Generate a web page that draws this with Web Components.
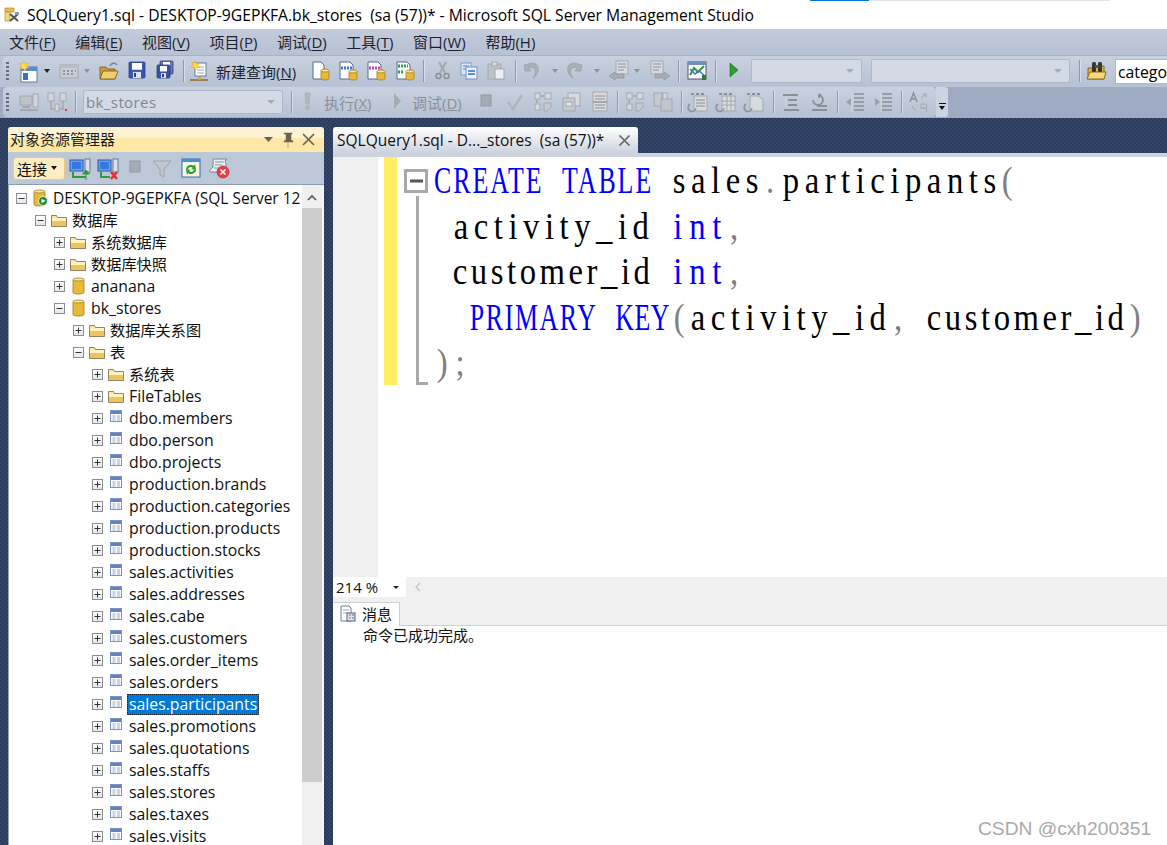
<!DOCTYPE html>
<html lang="zh"><head><meta charset="utf-8"><title>SSMS</title>
<style>
html,body{margin:0;height:845px;overflow:hidden;background:#2e3f5e}
body{font-family:"Open Sans","Noto Sans CJK SC",sans-serif}
</style></head><body>
<ssms-app>
  <title-bar>SQLQuery1.sql - DESKTOP-9GEPKFA.bk_stores&nbsp; (sa (57))* - Microsoft SQL Server Management Studio</title-bar>
  <menu-bar>
    <menu-item label="文件" key="F"></menu-item><menu-item label="编辑" key="E"></menu-item><menu-item label="视图" key="V"></menu-item><menu-item label="项目" key="P"></menu-item><menu-item label="调试" key="D"></menu-item><menu-item label="工具" key="T"></menu-item><menu-item label="窗口" key="W"></menu-item><menu-item label="帮助" key="H"></menu-item>
  </menu-bar>
  <tool-bar>
    <ui-icon name="newproj" ml="9"></ui-icon><drop-tri ml="6"></drop-tri>
    <ui-icon name="gridgray" ml="9"></ui-icon><drop-tri ml="5" off></drop-tri>
    <ui-icon name="open" ml="9"></ui-icon><ui-icon name="save" ml="9"></ui-icon><ui-icon name="saveall" ml="10"></ui-icon>
    <tb-sep ml="9"></tb-sep><ui-icon name="newquery" ml="6"></ui-icon>
    <tb-text ml="8" w="81" label="新建查询" key="N"></tb-text>
    <ui-icon name="dbdoc" ml="15"></ui-icon><ui-icon name="mdx" ml="9"></ui-icon><ui-icon name="dmx" ml="9"></ui-icon><ui-icon name="xml" ml="10"></ui-icon>
    <tb-sep ml="8"></tb-sep><ui-icon name="cut" ml="11"></ui-icon><ui-icon name="copy" ml="10"></ui-icon><ui-icon name="paste" ml="9"></ui-icon>
    <tb-sep ml="10"></tb-sep><ui-icon name="undo" ml="7"></ui-icon><drop-tri ml="11" off></drop-tri><ui-icon name="redo" ml="8"></ui-icon><drop-tri ml="11" off></drop-tri>
    <ui-icon name="navback" ml="9"></ui-icon><drop-tri ml="5" off></drop-tri><ui-icon name="navfwd" ml="10"></ui-icon>
    <tb-sep ml="8"></tb-sep><ui-icon name="chart" ml="8"></ui-icon><tb-sep ml="8"></tb-sep><ui-icon name="playgreen" ml="13"></ui-icon>
    <tb-combo w="111" ml="12"></tb-combo><tb-combo w="199" ml="9"></tb-combo>
    <tb-sep ml="9"></tb-sep><ui-icon name="binoc" ml="7"></ui-icon>
    <search-box ml="9">catego</search-box>
  </tool-bar>
  <tool-bar second>
    <ui-icon name="srv1" ml="10"></ui-icon><ui-icon name="srv2" ml="8"></ui-icon><tb-sep ml="8"></tb-sep>
    <tb-combo w="200" ml="7" text="bk_stores"></tb-combo><tb-sep ml="8"></tb-sep>
    <ui-icon name="excl" ml="10"></ui-icon><tb-text ml="11" w="49" label="执行" key="X" off></tb-text>
    <ui-icon name="playgray" ml="20"></ui-icon><tb-text ml="10" w="50" label="调试" key="D" off></tb-text>
    <ui-icon name="stop" ml="18"></ui-icon><ui-icon name="check" ml="14"></ui-icon><ui-icon name="flow1" ml="10"></ui-icon><ui-icon name="docs" ml="10"></ui-icon><ui-icon name="panel" ml="11"></ui-icon>
    <tb-sep ml="9"></tb-sep><ui-icon name="flow1" ml="8"></ui-icon><ui-icon name="srvdoc" ml="9"></ui-icon>
    <tb-sep ml="8"></tb-sep><ui-icon name="res1" ml="7"></ui-icon><ui-icon name="res2" ml="9"></ui-icon><ui-icon name="res3" ml="9"></ui-icon>
    <tb-sep ml="9"></tb-sep><ui-icon name="lines" ml="8"></ui-icon><ui-icon name="unlines" ml="11"></ui-icon>
    <tb-sep ml="9"></tb-sep><ui-icon name="outdent" ml="7"></ui-icon><ui-icon name="indent" ml="8"></ui-icon>
    <tb-sep ml="8"></tb-sep><ui-icon name="replace" ml="7"></ui-icon>
    <tb-overflow></tb-overflow>
  </tool-bar>
  <dock-area>
    <explorer-panel>
      <span slot="title">对象资源管理器</span>
      <tree-node level="0" icon="server" exp="-" fs="15.5">DESKTOP-9GEPKFA (SQL Server 12</tree-node>
      <tree-node level="1" icon="folder" exp="-">数据库</tree-node>
      <tree-node level="2" icon="folder">系统数据库</tree-node>
      <tree-node level="2" icon="folder">数据库快照</tree-node>
      <tree-node level="2" icon="db">ananana</tree-node>
      <tree-node level="2" icon="db" exp="-">bk_stores</tree-node>
      <tree-node level="3" icon="folder">数据库关系图</tree-node>
      <tree-node level="3" icon="folder" exp="-">表</tree-node>
      <tree-node level="4" icon="folder">系统表</tree-node>
      <tree-node level="4" icon="folder">FileTables</tree-node>
      <tree-node level="4" icon="table">dbo.members</tree-node>
      <tree-node level="4" icon="table">dbo.person</tree-node>
      <tree-node level="4" icon="table">dbo.projects</tree-node>
      <tree-node level="4" icon="table">production.brands</tree-node>
      <tree-node level="4" icon="table">production.categories</tree-node>
      <tree-node level="4" icon="table">production.products</tree-node>
      <tree-node level="4" icon="table">production.stocks</tree-node>
      <tree-node level="4" icon="table">sales.activities</tree-node>
      <tree-node level="4" icon="table">sales.addresses</tree-node>
      <tree-node level="4" icon="table">sales.cabe</tree-node>
      <tree-node level="4" icon="table">sales.customers</tree-node>
      <tree-node level="4" icon="table">sales.order_items</tree-node>
      <tree-node level="4" icon="table">sales.orders</tree-node>
      <tree-node level="4" icon="table" selected>sales.participants</tree-node>
      <tree-node level="4" icon="table">sales.promotions</tree-node>
      <tree-node level="4" icon="table">sales.quotations</tree-node>
      <tree-node level="4" icon="table">sales.staffs</tree-node>
      <tree-node level="4" icon="table">sales.stores</tree-node>
      <tree-node level="4" icon="table">sales.taxes</tree-node>
      <tree-node level="4" icon="table">sales.visits</tree-node>
    </explorer-panel>
    <editor-pane>
      <span slot="tab">SQLQuery1.sql - D..._stores&nbsp; (sa (57))*</span>
      <code-line><sql-t k="kw">CREATE</sql-t><sql-t> </sql-t><sql-t k="kw">TABLE</sql-t><sql-t> </sql-t><sql-t>sales</sql-t><sql-t k="p">.</sql-t><sql-t>participants</sql-t><sql-t k="p">(</sql-t></code-line>
      <code-line indent="1"><sql-t>activity_id</sql-t><sql-t> </sql-t><sql-t k="kw">int</sql-t><sql-t k="p">,</sql-t></code-line>
      <code-line indent="1"><sql-t>customer_id</sql-t><sql-t> </sql-t><sql-t k="kw">int</sql-t><sql-t k="p">,</sql-t></code-line>
      <code-line indent="2"><sql-t k="kw">PRIMARY</sql-t><sql-t> </sql-t><sql-t k="kw">KEY</sql-t><sql-t k="p">(</sql-t><sql-t>activity_id</sql-t><sql-t k="p">,</sql-t><sql-t> </sql-t><sql-t>customer_id</sql-t><sql-t k="p">)</sql-t></code-line>
      <code-line><sql-t k="p">)</sql-t><sql-t k="p">;</sql-t></code-line>
      <span slot="msg">命令已成功完成。</span>
    </editor-pane>
  </dock-area>
  <water-mark>CSDN @cxh200351</water-mark>
</ssms-app>
<script>
const G='#a4a8ae',GD='#8b9098',GL='#d5d8dc';
const dbCyl=(x,y,w,h)=>`<path d="M${x} ${y+1.5}v${h-3}c0 2 ${w} 2 ${w} 0v-${h-3}z" fill="#e8b93a" stroke="#a57c1c" stroke-width=".8"/><ellipse cx="${x+w/2}" cy="${y+1.5}" rx="${w/2}" ry="1.5" fill="#f8e7a0" stroke="#a57c1c" stroke-width=".8"/>`;
const doc=(x,y,w,h,s='#5a6a80',f='#fff')=>`<path d="M${x} ${y}h${w-3}l3 3v${h-3}h-${w}z" fill="${f}" stroke="${s}"/>`;
const floppy=(c,x=2,y=2,s=16)=>`<rect x="${x}" y="${y}" width="${s}" height="${s}" rx="1" fill="${c}" stroke="#27408b" stroke-width=".8"/><rect x="${x+3}" y="${y+1}" width="${s-6}" height="${s*.42}" fill="#fff"/><rect x="${x+4}" y="${y+s*.62}" width="${s-8}" height="${s*.38}" fill="#dfe3f0"/><rect x="${x+5}" y="${y+s*.68}" width="2" height="${s*.26}" fill="#27408b"/>`;
const I={
newproj:[20,`<rect x="3" y="6" width="16" height="15" fill="#fff" stroke="#5c7ba8"/><rect x="3" y="6" width="16" height="4" fill="#5b8bd0"/><rect x="5" y="12" width="5" height="7" fill="#3c6fb4"/><path d="M6 0l1.3 3L10 2 8.6 5 11 6.5 8 7.3 7 10 5 7.5 1.5 8l2-2.6L1.500 2.500 4.500 3z" fill="#ffdc50" stroke="#e0a020" stroke-width=".5"/>`],
gridgray:[20,`<rect x="1" y="4" width="18" height="13" fill="#c9ccd1" stroke="${G}"/><rect x="1" y="4" width="18" height="3" fill="#b9bcc2"/><path d="M4 10h2M8 10h2M12 10h2M16 10h1M4 13h2M8 13h2M12 13h2" stroke="#8f949b" stroke-width="2"/>`],
open:[20,`<path d="M1 6h6l2 2h7v10H1z" fill="#c99a3a" stroke="#8a6a20"/><path d="M1 18l3-8h15l-3 8z" fill="#f4cd70" stroke="#8a6a20"/><path d="M11 5c1-3 5-4 7-1" fill="none" stroke="#6a88b8" stroke-width="1.500"/>`],
save:[18,floppy('#3f56b0',1,1,16)],
saveall:[18,floppy('#6a75b8',4,0,13)+floppy('#3f4fa0',1,4,13)],
newquery:[18,`<rect x="5" y="2" width="11" height="13" fill="#fff" stroke="#6c7a8c"/><path d="M7 6h7M7 9h7M7 12h7" stroke="#9aa6b5"/><path d="M5 0l1.300 2.500L9 2 8 4.500 10 6.500 7 6.500 5 9 4 6.500 1 6l2-2L2 1.500 4.200 2z" fill="#ffd84a" stroke="#d99a1a" stroke-width=".5"/><path d="M0 19h18" stroke="#8a6a20" stroke-width="1.500"/><rect x="8" y="16" width="3" height="3" fill="#d9a520"/>`],
dbdoc:[18,doc(1,1,11,17)+dbCyl(9,8,8,11)],
mdx:[19,doc(1,1,13,17)+`<path d="M2 7h11" stroke="#3a7bd0" stroke-width="3" stroke-dasharray="2 1"/>`+dbCyl(10,9,8,10)],
dmx:[19,doc(1,1,13,17)+`<path d="M2 7h11" stroke="#d040c0" stroke-width="3" stroke-dasharray="2 1"/>`+dbCyl(10,9,8,10)],
xml:[19,doc(1,1,13,17)+`<path d="M2 5h10M2 11h6" stroke="#2f9a50" stroke-width="3" stroke-dasharray="2 1"/>`+dbCyl(10,9,8,10)],
cut:[15,`<path d="M4 1l6 11M11 1L5 12" stroke="${G}" stroke-width="2"/><circle cx="3.500" cy="15" r="2.500" fill="none" stroke="${GD}" stroke-width="1.500"/><circle cx="11.500" cy="15" r="2.500" fill="none" stroke="${GD}" stroke-width="1.500"/>`],
copy:[18,`<rect x="1" y="2" width="10" height="12" fill="#dfe8f6" stroke="#7e9cc6"/><path d="M3 5h6M3 8h6" stroke="#4f7ec2"/><rect x="6" y="6" width="11" height="12" fill="#eef3fb" stroke="#6f90c0"/><path d="M8 10h7M8 13h7" stroke="#2f6fc6" stroke-width="1.500"/>`],
paste:[18,`<rect x="1" y="3" width="13" height="15" fill="#bfc3c9" stroke="${G}"/><rect x="5" y="1" width="5" height="4" fill="#d8dade" stroke="${G}"/><rect x="8" y="8" width="9" height="10" fill="#eceef0" stroke="${G}"/>`],
undo:[18,`<path d="M5 3C11 0 17 4 15 11c-1 3-3 5-5 6 2-3 3-6 2-8-1-3-4-3-6-2l2 3-6 0-1-6z" fill="#aab0b8" stroke="#9399a1" stroke-width=".6"/>`],
redo:[17,`<path d="M12 3C6 0 0 4 2 11c1 3 3 5 5 6-2-3-3-6-2-8 1-3 4-3 6-2l-2 3 6 0 1-6z" fill="#aab0b8" stroke="#9399a1" stroke-width=".6"/>`],
navback:[20,`<rect x="7" y="0" width="12" height="13" fill="#d9dbdf" stroke="${G}"/><path d="M9 3h8M9 6h8M9 9h6" stroke="${GD}"/><path d="M0 15l6-4v2h9v4H6v2z" fill="#a8adb4" stroke="${GD}" stroke-width=".6"/>`],
navfwd:[20,`<rect x="1" y="0" width="12" height="13" fill="#d9dbdf" stroke="${G}"/><path d="M3 3h8M3 6h8M3 9h6" stroke="${GD}"/><path d="M20 15l-6-4v2H5v4h9v2z" fill="#a8adb4" stroke="${GD}" stroke-width=".6"/>`],
chart:[20,`<rect x="1" y="1" width="18" height="17" fill="#fff" stroke="#44546a"/><rect x="1" y="1" width="18" height="3" fill="#6f8fbf"/><path d="M3 14l4-7 4 4 6-6" fill="none" stroke="#2f9a3a" stroke-width="2"/><path d="M3 8l5 5 4-3 5 4" fill="none" stroke="#3a6fd0" stroke-width="1.500"/><rect x="15" y="14" width="4" height="5" fill="#2e7a2e"/>`],
playgreen:[10,`<path d="M1 2l8 7-8 7z" fill="#2f9a2f" stroke="#1d6a1d" stroke-width=".6"/>`],
binoc:[19,`<path d="M1 7h6l2-2h8v13H1z" fill="#e0b040" stroke="#8a6a20"/><path d="M0 18l3-7h16l-2 7z" fill="#f6d878" stroke="#8a6a20"/><rect x="5" y="1" width="4" height="10" rx="1.500" fill="#333"/><rect x="11" y="1" width="4" height="10" rx="1.500" fill="#333"/><rect x="8" y="4" width="4" height="3" fill="#555"/>`],
srv1:[20,`<rect x="1" y="4" width="12" height="9" fill="#bfc2c7" stroke="${G}"/><rect x="3" y="14" width="8" height="2" fill="${G}"/><rect x="14" y="2" width="5" height="13" fill="#d3d5d9" stroke="${G}"/><path d="M1 18h18" stroke="${G}" stroke-width="2"/>`],
srv2:[20,`<rect x="1" y="1" width="6" height="8" fill="#d3d5d9" stroke="${G}"/><rect x="13" y="1" width="6" height="8" fill="#d3d5d9" stroke="${G}"/><path d="M4 9v8h12V9" fill="none" stroke="${G}" stroke-width="1.500"/><rect x="8" y="12" width="4" height="7" fill="#d3d5d9" stroke="${G}"/><rect x="18" y="17" width="2" height="2" fill="#c44"/>`],
excl:[11,`<path d="M3 1h5l-1 11H4z" fill="#b4b8be" stroke="${G}" stroke-width=".6"/><circle cx="5.500" cy="15.500" r="2" fill="#b4b8be" stroke="${G}" stroke-width=".6"/>`],
playgray:[9,`<path d="M1 1l7 8-7 8z" fill="#a6abb3"/>`],
stop:[12,`<rect x="1" y="3" width="10" height="11" fill="#a6abb3" stroke="#9399a1"/>`],
check:[18,`<path d="M2 10l5 7L16 3" fill="none" stroke="#b1b5bb" stroke-width="2.500"/>`],
flow1:[18,`<rect x="1" y="1" width="5" height="6" fill="#d8dade" stroke="${G}"/><rect x="11" y="1" width="6" height="6" fill="#d8dade" stroke="${G}"/><path d="M7 4h3M3 8v3" stroke="${GD}"/><rect x="1" y="12" width="5" height="6" fill="#d8dade" stroke="${G}"/><path d="M10 11h7v4l-4 4h-3z" fill="#c6c9ce" stroke="${G}"/>`],
docs:[19,`<rect x="6" y="1" width="12" height="13" fill="#d8dade" stroke="${G}"/><rect x="1" y="6" width="12" height="13" fill="#c6c9ce" stroke="${G}"/><rect x="4" y="10" width="6" height="4" fill="#e8eaec" stroke="${G}"/>`],
panel:[16,`<rect x="1" y="0" width="14" height="19" fill="#d8dade" stroke="${G}"/><path d="M1 10h14" stroke="${G}" stroke-width="2"/><path d="M3 4h10M3 7h10M3 13h10M3 16h10" stroke="${GD}"/>`],
srvdoc:[20,`<rect x="1" y="1" width="8" height="13" fill="#c6c9ce" stroke="${G}"/><rect x="10" y="1" width="4" height="9" fill="#d8dade" stroke="${G}"/><rect x="8" y="7" width="11" height="12" fill="#c2c5ca" stroke="${G}"/>`],
res1:[19,`<rect x="5" y="4" width="13" height="15" fill="#d8dade" stroke="${G}"/><path d="M7 8h9M7 11h9M7 14h9" stroke="${GD}"/><path d="M2 2h3M7 2h3M12 2h3" stroke="${GD}" stroke-width="2"/><path d="M1 12a4 4 0 1 0 6 4" fill="none" stroke="${GD}" stroke-width="1.500"/>`],
res2:[19,`<rect x="5" y="4" width="13" height="15" fill="#d8dade" stroke="${G}"/><path d="M5 9h13M5 13h13M10 4v15M14 4v15" stroke="${G}"/><path d="M2 2h3M7 2h3M12 2h3" stroke="${GD}" stroke-width="2"/><path d="M1 12a4 4 0 1 0 6 4" fill="none" stroke="${GD}" stroke-width="1.500"/>`],
res3:[19,`<path d="M5 4h9l4 4v11H5z" fill="#d8dade" stroke="${G}"/><path d="M2 2h3M7 2h3M12 2h3" stroke="${GD}" stroke-width="2"/><path d="M1 12a4 4 0 1 0 6 4" fill="none" stroke="${GD}" stroke-width="1.500"/>`],
lines:[18,`<path d="M1 3h15M6 8h9M6 13h9M2 18h15" stroke="${GD}" stroke-width="2"/><path d="M4 6v9" stroke="${GL}"/>`],
unlines:[17,`<path d="M2 8a5 5 0 1 0 9-3l-3-3M8 2v4" fill="none" stroke="${GD}" stroke-width="1.800"/><path d="M6 14h10M1 18h15" stroke="${GD}" stroke-width="2"/>`],
outdent:[20,`<path d="M9 2h10M9 6h10M9 10h10M9 14h10M9 18h10" stroke="${GD}" stroke-width="1.500"/><path d="M1 10l5-4v8z" fill="#9aa0a8"/><path d="M7 0v20" stroke="${GL}"/>`],
indent:[20,`<path d="M9 2h10M9 6h10M9 10h10M9 14h10M9 18h10" stroke="${GD}" stroke-width="1.500"/><path d="M7 10L2 6v8z" fill="#9aa0a8"/><path d="M8 0v20" stroke="${GL}"/>`],
replace:[19,`<path d="M1 10L4.500 1 8 10M2.500 7h4" fill="none" stroke="${GD}" stroke-width="1.500"/><path d="M12 6l5-4M14 2h3v3" fill="none" stroke="${G}"/><path d="M4 14a3 3 0 0 0 3 4M12 12h5l1 2-1 2h-5zm0 4h5l1 2-1 2" fill="none" stroke="${G}"/>`],
conn:[21,`<rect x="1" y="2" width="13" height="11" fill="#6fa0ea" stroke="#2f55a5"/><rect x="3" y="4" width="9" height="7" fill="#2f7be0"/><rect x="16" y="1" width="5" height="13" fill="#dbe1ea" stroke="#6a7a90"/><path d="M4 14v5h13" fill="none" stroke="#2e9a3a" stroke-width="2"/><path d="M17 22v-9M13.500 16l3.500-4 3.500 4z" fill="#2e9a3a" stroke="#2e9a3a"/>`],
disc:[21,`<rect x="1" y="2" width="13" height="11" fill="#6fa0ea" stroke="#2f55a5"/><rect x="3" y="4" width="9" height="7" fill="#2f7be0"/><rect x="16" y="1" width="5" height="13" fill="#dbe1ea" stroke="#6a7a90"/><path d="M4 14v5h9" fill="none" stroke="#2e9a3a" stroke-width="2"/><path d="M14 14l6 7M20 14l-6 7" stroke="#e0332a" stroke-width="2.500"/>`],
filter:[20,`<path d="M1 3h18l-7 8v8l-4-2v-6z" fill="#c3c7cd" stroke="#9fa3a9"/>`],
refresh:[20,`<rect x="1" y="1" width="18" height="18" fill="#f8f6e4" stroke="#2f70b0"/><rect x="1" y="1" width="18" height="3" fill="#4a90d0"/><path d="M5 11a5 5 0 0 1 8-3l1-2 1 6-5-1 2-1a3 3 0 0 0-5 1z" fill="#2e9a2e"/><path d="M15 12a5 5 0 0 1-8 3l-1 2-1-6 5 1-2 1a3 3 0 0 0 5-1z" fill="#2e9a2e"/>`],
activity:[20,`<path d="M4 1h14c-2 1-2 3-1 5v8H2c-1 0-2-1 0-3l2-2z" fill="#e8ecf2" stroke="#77879b"/><path d="M6 4h9M6 7h7M5 10h5" stroke="#8a9aaf"/><circle cx="14" cy="14" r="6" fill="#e8404a" stroke="#a02028" stroke-width=".6"/><path d="M11.500 11.500l5 5M16.500 11.500l-5 5" stroke="#fff" stroke-width="1.500"/>`],
server:[15,dbCyl(1,2,11,16)+`<circle cx="10" cy="13" r="4.500" fill="#1f8a2f" stroke="#fff" stroke-width=".8"/><path d="M8.500 10.700l4 2.300-4 2.300z" fill="#fff"/>`],
folder:[16,`<path d="M.5 5.500h5l1 2h9v9H.5z" fill="#fbe7a0" stroke="#77674a" stroke-width=".8"/><path d="M1 8h14v8H1z" fill="#eec45c"/><path d="M1 8h14v3H1z" fill="#fff3c4"/>`],
db:[13,dbCyl(1,2,11,16)],
table:[14,`<rect x="1.500" y="2.500" width="11" height="11" fill="#fff" stroke="#7d95bc"/><rect x="2" y="3" width="10" height="3" fill="#5f82c0"/><path d="M3.500 8h3M8 8h3M3.500 10h3M8 10h3M3.500 12h3M8 12h3" stroke="#8ea6cc"/>`]
};
function shadow(el,html){const r=el.attachShadow({mode:'open'});r.innerHTML=html;return r}
function def(name,fn){customElements.define(name,class extends HTMLElement{connectedCallback(){if(!this.shadowRoot)fn(this)}})}
const ml=e=>e.hasAttribute('ml')?`margin-left:${e.getAttribute('ml')}px;`:'';
def('ssms-app',e=>shadow(e,`<style>:host{display:flex;flex-direction:column;height:845px;position:relative;overflow:hidden}</style><slot></slot>`));
def('title-bar',e=>shadow(e,`<style>:host{display:block;background:#fff;height:29px;flex:none}
.strip{display:flex;height:1px}.a{width:810px}.b{width:59px;background:#0078d7}.c{width:241px;background:#e4e4e4}
.row{display:flex;align-items:center;height:28px;padding-left:4px;gap:7px;font:15.700px "Open Sans",sans-serif;color:#000;white-space:pre}
svg{width:16px;height:16px;flex:none}</style>
<div class="strip"><i class="a"></i><i class="b"></i><i class="c"></i></div>
<div class="row"><svg viewBox="0 0 16 16"><path d="M1 1h9v4H1z" fill="#e8c050" stroke="#a08020" stroke-width=".6"/><path d="M1 5h5v9H1z" fill="#f2d878" stroke="#a08020" stroke-width=".6"/><path d="M6 7l8 7M14 7l-8 7" stroke="#555" stroke-width="2"/><rect x="11" y="5" width="4" height="3" fill="#89a"/></svg><span><slot></slot></span></div>`));
def('menu-bar',e=>shadow(e,`<style>:host{display:flex;height:26px;flex:none;align-items:center;gap:19.600px;padding-left:9px;background:linear-gradient(#c3ccdc,#b6c1d3);border-bottom:1px solid #a6b2c6}</style><slot></slot>`));
def('menu-item',e=>shadow(e,`<style>:host{display:block;font:15px "Open Sans","Noto Sans CJK SC",sans-serif;color:#1c2330;white-space:nowrap;line-height:24px}u{text-underline-offset:2px}</style>${e.getAttribute('label')}(<u>${e.getAttribute('key')}</u>)`));
def('tool-bar',e=>{const s=e.hasAttribute('second');shadow(e,`<style>:host{display:block;flex:none;height:31px;background:${s?'#9eabc2':'#b9c4d6'};padding-left:3px;box-sizing:border-box}
.in{display:flex;align-items:center;height:30px;background:linear-gradient(#c8d1df,#b6c1d3);border-radius:4px 0 0 4px;position:relative;padding-left:2px;${s?'width:933px;box-sizing:border-box;border-radius:4px;':''}}
.g{width:3px;height:18px;margin-left:1px;flex:none;background:repeating-linear-gradient(#5f6c82 0 2px,transparent 2px 4px)}</style><div class="in"><i class="g"></i><slot></slot></div>`)});
def('ui-icon',e=>{const n=e.getAttribute('name'),[w,b]=I[n];shadow(e,`<style>:host{display:block;flex:none;width:${w}px;height:20px;${ml(e)}}svg{display:block;width:${w}px;height:20px;overflow:visible}</style><svg viewBox="0 0 ${w} 20">${b}</svg>`)});
def('drop-tri',e=>shadow(e,`<style>:host{display:block;flex:none;width:0;height:0;border:3.500px solid transparent;border-top:4px solid ${e.hasAttribute('off')?'#8d939c':'#222'};border-bottom:0;${ml(e)}}</style>`));
def('tb-sep',e=>shadow(e,`<style>:host{display:block;flex:none;width:1px;height:22px;background:#8f99aa;box-shadow:1px 0 #d8deea;${ml(e)}}</style>`));
def('tb-text',e=>shadow(e,`<style>:host{display:block;flex:none;width:${e.getAttribute('w')}px;white-space:nowrap;font:15px "Open Sans","Noto Sans CJK SC",sans-serif;color:${e.hasAttribute('off')?'#8a8f98':'#1c2330'};${ml(e)}}</style>${e.getAttribute('label')}(<u>${e.getAttribute('key')}</u>)`));
def('tb-combo',e=>shadow(e,`<style>:host{display:flex;flex:none;align-items:center;box-sizing:border-box;width:${e.getAttribute('w')}px;height:24px;background:#d3dae6;border:1px solid #aeb8c9;border-radius:2px;padding:0 4px 0 2px;font:15px "Open Sans",sans-serif;color:#7f8692;letter-spacing:.4px;${ml(e)}}
span{flex:1}i{width:0;height:0;border:4px solid transparent;border-top:4px solid #a3abb8;border-bottom:0;margin-right:3px}</style><span>${e.getAttribute('text')||''}</span><i></i>`));
def('search-box',e=>shadow(e,`<style>:host{display:block;flex:1;height:25px;background:#fff;border:1px solid #aeb8c9;border-right:0;box-sizing:border-box;font:15.800px/24px "Open Sans",sans-serif;color:#000;padding-left:2px;overflow:hidden;${ml(e)}}</style><slot></slot>`));
def('tb-overflow',e=>shadow(e,`<style>:host{position:absolute;left:933px;top:0;width:12px;height:30px;background:#ccd4e1;border-radius:0 3px 3px 0;display:flex;flex-direction:column;justify-content:flex-end;align-items:center;padding-bottom:7px;box-sizing:border-box;gap:2px}
b{width:7px;height:1px;background:#111}i{width:0;height:0;border:3.500px solid transparent;border-top:4px solid #111;border-bottom:0}</style><b></b><i></i>`));
def('dock-area',e=>shadow(e,`<style>:host{display:flex;flex:1;min-height:0;padding:9px 0 0 8px;gap:9px;background:repeating-conic-gradient(#2b3b59 0 25%,#33466a 0 50%) 0 0/4px 4px}</style><slot></slot>`));
def('explorer-panel',e=>shadow(e,`<style>:host{display:flex;flex-direction:column;width:316px;flex:none;min-height:0;font:15px "Open Sans","Noto Sans CJK SC",sans-serif}
.h{height:25px;flex:none;box-sizing:border-box;display:flex;align-items:center;padding:0 5px 3px 2px;border-radius:3px 3px 0 0;background:linear-gradient(#fdf3d4 0 45%,#ffe8a6 45%);color:#1c1c1c;font-size:15px}
.h .t{flex:1}.h svg{display:block;margin-top:3px}
.tb{height:33px;flex:none;box-sizing:border-box;background:#bcc7d8;display:flex;align-items:center;padding-left:5px;border-bottom:1px solid #8f9bb0}
.c{display:flex;align-items:center;gap:4px;width:52px;height:23px;box-sizing:border-box;padding-left:3px;background:#fdedc0;border:1px solid #f0c880;border-radius:3px;font-size:15px;color:#111;margin-right:4px}
.c i{width:0;height:0;border:3px solid transparent;border-top:4px solid #111;border-bottom:0}
.m{flex:1;min-height:0;display:flex;background:#fff;border-left:1px solid #9aa6b8;border-right:2px solid #f4f5f7;overflow:hidden}
.tree{flex:1;min-width:0;padding-top:2px;overflow:hidden}
.sb{width:20px;flex:none;background:#f0f0f0;display:flex;flex-direction:column}
.up{height:22px;flex:none;display:flex;align-items:center;justify-content:center;padding-top:1px}.th{height:574px;background:#cdcdcd;flex:none}
</style>
<div class="h"><span class="t"><slot name="title"></slot></span>
<svg width="56" height="18" viewBox="0 0 56 18"><path d="M1 6h9l-4.500 5z" fill="#6b6350"/><path d="M21 2h8v1h-1v6l2 1v1h-9v-1l2-1V3h-2zM25 11v6" fill="#6b6350" stroke="#6b6350" stroke-width=".5"/><path d="M40 3l11 11M51 3L40 14" stroke="#6b6350" stroke-width="1.700"/></svg></div>
<div class="tb"><div class="c">连接<i></i></div><ui-icon name="conn"></ui-icon><ui-icon name="disc" ml="7"></ui-icon><ui-icon name="stop" ml="11"></ui-icon><ui-icon name="filter" ml="11"></ui-icon><ui-icon name="refresh" ml="9"></ui-icon><ui-icon name="activity" ml="8"></ui-icon></div>
<div class="m"><div class="tree"><slot></slot></div><div class="sb"><div class="up"><svg width="10" height="7" viewBox="0 0 10 7"><path d="M1 6l4-4 4 4" fill="none" stroke="#555" stroke-width="1.600"/></svg></div><div class="th"></div></div></div>`));
def('tree-node',e=>{const l=+e.getAttribute('level'),ic=e.getAttribute('icon'),x=e.getAttribute('exp')=='-',sel=e.hasAttribute('selected');
const [w,b]=I[ic];const cjk=/[\u4e00-\u9fff]/.test(e.textContent);const fs=e.getAttribute('fs')||(cjk?15.2:15.8);
shadow(e,`<style>:host{display:flex;align-items:center;height:22px;white-space:nowrap;font:${fs}px "Open Sans","Noto Sans CJK SC",sans-serif;color:#101010;padding-left:${7+19*l}px;overflow:hidden}
.x{width:11px;height:11px;flex:none;box-sizing:border-box;border:1px solid #8a8f96;background:linear-gradient(#fff,#e4e6ea);margin-right:4px;display:block}
.ic{width:18px;flex:none;display:flex;justify-content:center;margin-right:2px}
svg{display:block;overflow:visible}
.t{padding:0 2px;line-height:21px;${sel?'background:#0078d7;color:#fff;outline:1px dotted #222;outline-offset:-1px;':''}}</style>
<svg class="x" viewBox="0 0 9 9"><path d="M1.500 4.500h6${x?'':'M4.500 1.500v6'}" stroke="#333" stroke-width="1" fill="none"/></svg><span class="ic"><svg width="${w}" height="20" viewBox="0 0 ${w} 20" style="height:20px">${b}</svg></span><span class="t"><slot></slot></span>`)});
const CELL=18.24;
def('editor-pane',e=>shadow(e,`<style>:host{display:flex;flex-direction:column;flex:1;min-width:0;font:15px "Open Sans","Noto Sans CJK SC",sans-serif}
.tabs{height:26px;flex:none;display:flex}.tab{width:305px;box-sizing:border-box;border-radius:3px 3px 0 0;background:linear-gradient(#fff,#ccd3de);display:flex;align-items:center;padding:0 7px 0 4px;font-size:15.500px;color:#111;white-space:pre}
.tab span{flex:1}
.strip{height:4px;background:#ccd3de;flex:none}
.ed{height:420px;flex:none;display:flex;background:#fff;overflow:hidden}
.gut{width:45px;background:#f0f0f0;flex:none;margin-right:6px}.ch{width:13px;height:228px;background:#ffee62;flex:none;margin-right:7px}
.ol{flex:none;width:24px;margin-right:5px;height:228px}
.code{flex:none;margin-top:1px;width:730px}
.z{height:20px;flex:none;display:flex;align-items:center;background:#f0f0f0}
.zc{width:73px;height:20px;box-sizing:border-box;background:#fff;display:flex;align-items:center;padding:0 4px 0 3px;font-size:15px;color:#111}.zc span{flex:1}
.zc i{width:0;height:0;border:3.500px solid transparent;border-top:3.500px solid #222;border-bottom:0;margin-right:3px}
.bot{flex:1;background:#fff;min-height:0}
.mt{height:29px;box-sizing:border-box;background:#f0f0f0;padding-top:5px;border-bottom:1px solid #d0d0d0;display:flex}
.mtab{width:67px;height:24px;box-sizing:border-box;background:#fff;border:1px solid #d0d0d0;border-left:0;border-bottom:0;display:flex;align-items:center;gap:6px;padding:0 0 3px 7px;font-size:15px;color:#111}
.msg{padding:0 0 0 30px;font-size:15px;line-height:18px;color:#111}
</style>
<div class="tabs"><div class="tab"><span><slot name="tab"></slot></span><svg width="13" height="13" viewBox="0 0 13 13"><path d="M1.500 1.500l10 10M11.500 1.500l-10 10" stroke="#666" stroke-width="1.700"/></svg></div></div>
<div class="strip"></div>
<div class="ed"><div class="gut"></div><div class="ch"></div>
<svg class="ol" viewBox="0 0 24 228"><rect x="1.500" y="13.500" width="21" height="21" fill="#fff" stroke="#a9a9a9" stroke-width="3"/><path d="M6 24h13" stroke="#555" stroke-width="3"/><path d="M13.500 39v187.500H24" fill="none" stroke="#a9a9a9" stroke-width="3"/></svg>
<div class="code"><slot></slot></div></div>
<div class="z"><div class="zc"><span>214 %</span><i></i></div><svg width="10" height="12" viewBox="0 0 10 12" style="margin-left:7px"><path d="M7 2L3 6l4 4" fill="none" stroke="#c4c4c4" stroke-width="1.300"/></svg></div>
<div class="bot"><div class="mt"><div class="mtab"><svg width="16" height="17" viewBox="0 0 16 17"><path d="M1 1h8l2 2v13H1z" fill="#fff" stroke="#6c7a8c"/><path d="M3 5h6M3 8h6" stroke="#9ab"/><rect x="7" y="8" width="8" height="8" fill="#dfe6f2" stroke="#46648e"/><path d="M9 10h2M12 10h2M9 13h2" stroke="#d04a30"/><path d="M12 13h2" stroke="#3a8a3a"/></svg>消息</div></div><div class="msg"><slot name="msg"></slot></div></div>`));
def('code-line',e=>shadow(e,`<style>:host{display:block;height:45.6px;font:38px/45.6px "Liberation Serif",serif;color:#000;white-space:pre;padding-left:${(+(e.getAttribute('indent')||0))*CELL}px}</style><slot></slot>`));
const ctx=document.createElement('canvas').getContext('2d');ctx.font='38px "Liberation Serif"';
def('sql-t',e=>{const t=e.textContent,k=e.getAttribute('k');const s=/[A-Z]/.test(t)?.68:.86;const w=t.length*CELL,ls=(w/s-ctx.measureText(t).width)/t.length;
shadow(e,`<style>:host{display:inline-block;width:${w}px;transform:scaleX(${s});transform-origin:0 0;color:${k=='kw'?'#0000ff':k=='p'?'#808080':'#000'};letter-spacing:${ls}px;text-indent:${ls/2}px}</style><slot></slot>`)});
def('water-mark',e=>shadow(e,`<style>:host{position:absolute;left:978px;top:818px;font:19.200px "Liberation Sans",sans-serif;color:#a9a9a9;white-space:nowrap}</style><slot></slot>`));
</script>
</body></html>
